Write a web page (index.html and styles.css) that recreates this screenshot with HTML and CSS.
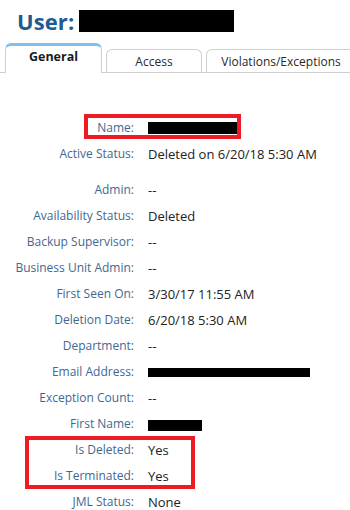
FILE: index.html
```html
<!DOCTYPE html>
<html>
<head>
<meta charset="utf-8">
<link rel="stylesheet" href="styles.css">
</head>
<body>
<div class="page">
  <h1 class="title"><span class="title-text">User:</span><span class="redact title-redact"></span></h1>
  <div class="tabs">
    <div class="tab active">General</div>
    <div class="tab access">Access</div>
    <div class="tab violations">Violations/Exceptions</div>
  </div>
  <div class="details">
    <div class="row"><span class="label">Name:</span><span class="value"><span class="redact name-redact"></span></span></div>
    <div class="row spaced"><span class="label">Active Status:</span><span class="value">Deleted on 6/20/18 5:30 AM</span></div>
    <div class="row"><span class="label">Admin:</span><span class="value">--</span></div>
    <div class="row"><span class="label">Availability Status:</span><span class="value">Deleted</span></div>
    <div class="row"><span class="label">Backup Supervisor:</span><span class="value">--</span></div>
    <div class="row"><span class="label">Business Unit Admin:</span><span class="value">--</span></div>
    <div class="row"><span class="label">First Seen On:</span><span class="value">3/30/17 11:55 AM</span></div>
    <div class="row"><span class="label">Deletion Date:</span><span class="value">6/20/18 5:30 AM</span></div>
    <div class="row"><span class="label">Department:</span><span class="value">--</span></div>
    <div class="row"><span class="label">Email Address:</span><span class="value"><span class="redact email-redact"></span></span></div>
    <div class="row"><span class="label">Exception Count:</span><span class="value">--</span></div>
    <div class="row"><span class="label">First Name:</span><span class="value"><span class="redact first-redact"></span></span></div>
    <div class="row"><span class="label">Is Deleted:</span><span class="value">Yes</span></div>
    <div class="row"><span class="label">Is Terminated:</span><span class="value">Yes</span></div>
    <div class="row"><span class="label">JML Status:</span><span class="value">None</span></div>
  </div>
  <div class="mark mark-name"></div>
  <div class="mark mark-flags"></div>
</div>
</body>
</html>
```
FILE: styles.css
```css
html, body {
  margin: 0;
  padding: 0;
  background: #ffffff;
}
.page {
  position: relative;
  width: 350px;
  height: 510px;
  overflow: hidden;
  font-family: "Open Sans", "Noto Sans", sans-serif;
}
.title {
  margin: 0;
  padding: 6px 0 0 17px;
  height: 36px;
  display: flex;
  align-items: flex-start;
  font-size: 22px;
  font-weight: 700;
  color: #1d5b92;
  line-height: 30px;
}
.title-text {
  letter-spacing: 0.1px;
}
.redact {
  display: inline-block;
  background: #000;
}
.title-redact {
  width: 155px;
  height: 22px;
  margin: 4px 0 0 5px;
}
.tabs {
  display: flex;
  align-items: flex-end;
  gap: 4px;
  padding-left: 5px;
  height: 29px;
  border-bottom: 1px solid #cfcfcf;
  margin-top: 1px;
}
.tab {
  box-sizing: border-box;
  flex: none;
  height: 23px;
  border: 1px solid #cfcfcf;
  border-bottom: none;
  border-radius: 6px 6px 0 0;
  font-size: 12px;
  color: #2a2a2a;
  text-align: center;
  line-height: 24px;
  background: #fff;
}
.tab.active {
  width: 97px;
  height: 30px;
  margin-bottom: -1px;
  border-top: 3px solid #7dc0ec;
  font-weight: 700;
  font-size: 12.5px;
  color: #1a1a1a;
  line-height: 22px;
}
.tab.access {
  width: 96px;
}
.tab.violations {
  width: 150px;
}
.details {
  padding-top: 42px;
}
.row {
  display: grid;
  grid-template-columns: 134px 1fr;
  column-gap: 14px;
  height: 26px;
  line-height: 26px;
}
.row.spaced {
  height: 36px;
}
.label {
  text-align: right;
  color: #3f6891;
  white-space: nowrap;
  font-size: 12px;
}
.value {
  color: #222222;
  white-space: nowrap;
  font-size: 13px;
}
.name-redact {
  width: 89px;
  height: 12px;
  vertical-align: -1px;
}
.email-redact {
  width: 162px;
  height: 9px;
  vertical-align: 0;
}
.first-redact {
  width: 54px;
  height: 11px;
  vertical-align: -2px;
}
.mark {
  position: absolute;
  box-sizing: border-box;
  border: 4px solid #ed1c24;
}
.mark-name {
  left: 84px;
  top: 114px;
  width: 157px;
  height: 25px;
}
.mark-flags {
  left: 25px;
  top: 436px;
  width: 170px;
  height: 53px;
}
```
